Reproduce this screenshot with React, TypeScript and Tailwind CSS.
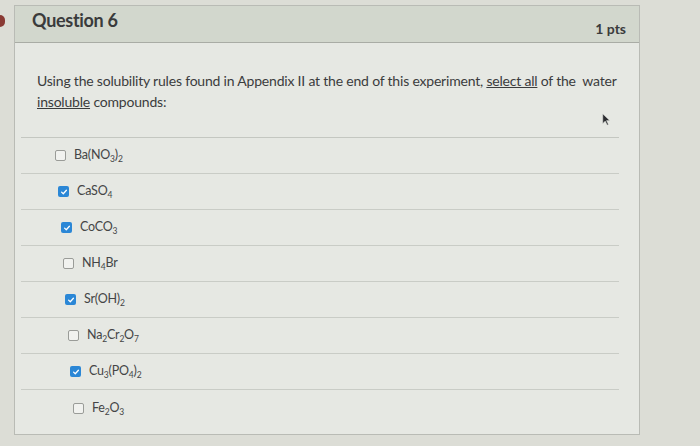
import type { ReactNode } from 'react';

type Option = { label: ReactNode; checked: boolean; pad: string };

const options: Option[] = [
  { label: <>Ba(NO<sub>3</sub>)<sub>2</sub></>, checked: false, pad: 'pl-[34px]' },
  { label: <>CaSO<sub>4</sub></>, checked: true, pad: 'pl-[37px]' },
  { label: <>CoCO<sub>3</sub></>, checked: true, pad: 'pl-[40px]' },
  { label: <>NH<sub>4</sub>Br</>, checked: false, pad: 'pl-[42px]' },
  { label: <>Sr(OH)<sub>2</sub></>, checked: true, pad: 'pl-[44px]' },
  { label: <>Na<sub>2</sub>Cr<sub>2</sub>O<sub>7</sub></>, checked: false, pad: 'pl-[47px]' },
  { label: <>Cu<sub>3</sub>(PO<sub>4</sub>)<sub>2</sub></>, checked: true, pad: 'pl-[49px]' },
  { label: <>Fe<sub>2</sub>O<sub>3</sub></>, checked: false, pad: 'pl-[52px]' },
];

function Box({ checked }: { checked: boolean }) {
  if (checked) {
    return (
      <span className="w-[11px] h-[11px] rounded-[2px] bg-[#2b87d6] flex items-center justify-center shrink-0">
        <svg viewBox="0 0 10 10" className="w-[8px] h-[8px]">
          <path d="M2 5.2 L4.1 7.2 L8 2.8" fill="none" stroke="white" strokeWidth="1.6" strokeLinecap="round" strokeLinejoin="round" />
        </svg>
      </span>
    );
  }
  return <span className="w-[11px] h-[11px] rounded-[2px] border border-[#9a9c98] bg-[#f1f2ef] shrink-0" />;
}

export default function App() {
  return (
    <div className="w-[700px] h-[446px] bg-[#dcddd6] overflow-hidden relative" style={{ fontFamily: 'Lato, "Open Sans", sans-serif' }}>
      <div className="absolute left-0 top-[15px] w-[5px] h-[12px] rounded-r-full bg-[#8a3a34]" />

      <div className="ml-[14px] mt-[5px] w-[626px] border border-[#b9bbb5] bg-[#e6e8e3] pb-[8px]">
        <div className="h-[37px] bg-[#d2d7cd] border-b border-[#a9aca5] flex items-start justify-between px-[17px]">
          <span className="text-[18px] font-bold text-[#3a3b3c] mt-[1px] tracking-[-0.3px]">Question 6</span>
          <span className="text-[14px] font-bold text-[#3a3b3c] mt-[12px] mr-[-4px]">1 pts</span>
        </div>

        <div className="pl-[22px] pr-[20px] pt-[27px]">
          <p className="text-[14px] leading-[21px] text-[#3b3c3d] tracking-[-0.2px]">
            Using the solubility rules found in Appendix II at the end of this experiment,{' '}
            <span className="underline">select all</span> of the&nbsp; water
            <br />
            <span className="underline">insoluble</span> compounds:
          </p>
        </div>

        <div className="mt-[25px] ml-[6px] mr-[20px] border-t border-[#c4c7c1]">
          {options.map((o, i) => (
            <div
              key={i}
              className={`${o.pad} h-[36px] flex items-center gap-[8px] text-[12.5px] text-[#444546] ${i < options.length - 1 ? 'border-b border-[#c9ccc6]' : ''}`}
            >
              <Box checked={o.checked} />
              <span className="[&_sub]:text-[8.5px] [&_sub]:align-[-1px] [&_sub]:leading-none tracking-[-0.2px]">{o.label}</span>
            </div>
          ))}
        </div>
      </div>

      <svg viewBox="0 0 10 16" className="absolute left-[602px] top-[113px] w-[8px] h-[13px]">
        <path d="M1 1 L1 13 L4 10 L6.5 15 L8 14.3 L5.6 9.4 L9.5 9.4 Z" fill="#2c2d30" stroke="#d8d9d4" strokeWidth="0.6" />
      </svg>
    </div>
  );
}
